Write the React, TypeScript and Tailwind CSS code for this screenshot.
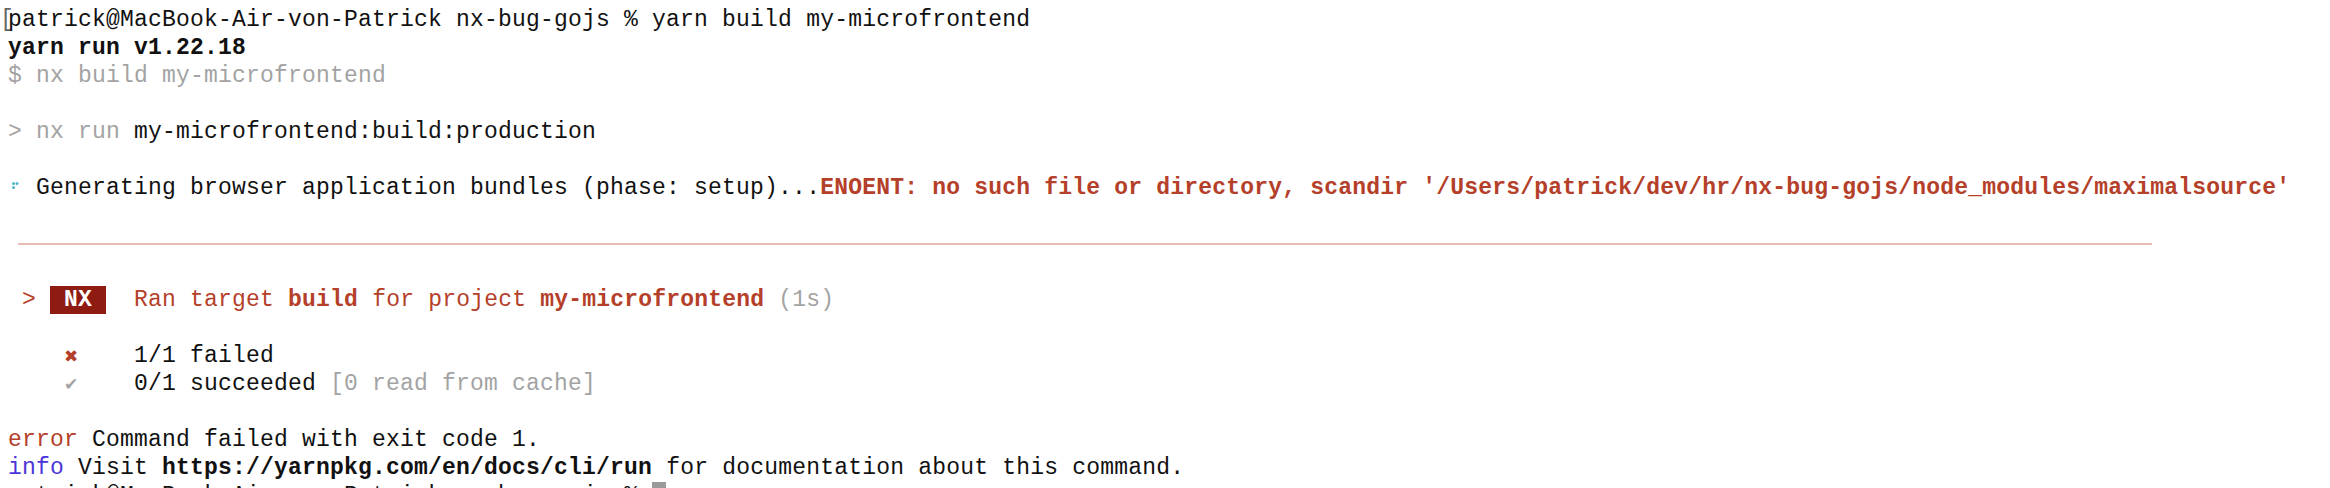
import React from "react";

const RED = "text-[#b5402a]";
const GRAY = "text-[#a3a3a3]";

function Line({ children }: { children?: React.ReactNode }) {
  return <div className="h-[28px] leading-[28px] whitespace-pre">{children ?? " "}</div>;
}

function Spinner() {
  return (
    <svg width="14" height="28" viewBox="0 0 14 28" className="inline-block align-top">
      <circle cx="5.5" cy="9.5" r="1.5" fill="#4eb6c9" />
      <circle cx="9" cy="9.5" r="1.5" fill="#4eb6c9" />
      <circle cx="5.5" cy="13.5" r="1.5" fill="#4eb6c9" />
    </svg>
  );
}

export default function App() {
  return (
    <div
      className="w-full h-[488px] overflow-hidden bg-white text-[#111] pt-[6px] pl-[8px] text-[23px] tracking-[0.2px]"
      style={{ fontFamily: '"Liberation Mono", "DejaVu Sans Mono", monospace' }}
    >
      <Line>
        <span className="inline-block w-[8px] -ml-[8px] text-[#666] font-light">[</span>
        patrick@MacBook-Air-von-Patrick nx-bug-gojs % yarn build my-microfrontend
      </Line>
      <Line>
        <span className="font-bold">yarn run v1.22.18</span>
      </Line>
      <Line>
        <span className={GRAY}>$ nx build my-microfrontend</span>
      </Line>
      <Line />
      <Line>
        <span className={GRAY}>&gt; nx run </span>my-microfrontend:build:production
      </Line>
      <Line />
      <Line>
        <Spinner />
        {" Generating browser application bundles (phase: setup)..."}
        <span className={`font-bold ${RED}`}>
          ENOENT: no such file or directory, scandir '/Users/patrick/dev/hr/nx-bug-gojs/node_modules/maximalsource'
        </span>
      </Line>
      <Line />
      <div className="h-[28px] flex items-center">
        <div className="ml-[10px] w-[2134px] h-[2px] bg-[#e6bcb4]" />
      </div>
      <Line />
      <Line>
        {" "}
        <span className={RED}>&gt;</span>
        {" "}
        <span className="inline-block h-[28px] bg-[#8e1c12] text-white font-bold">{" NX "}</span>
        {"  "}
        <span className={RED}>Ran target </span>
        <span className={`font-bold ${RED}`}>build</span>
        <span className={RED}> for project </span>
        <span className={`font-bold ${RED}`}>my-microfrontend</span>
        <span className={GRAY}> (1s)</span>
      </Line>
      <Line />
      <Line>
        {"    "}
        <span className="inline-block w-[14px] text-center text-[17px] text-[#b5402a]" style={{ fontFamily: '"DejaVu Sans", sans-serif' }}>✖</span>
        {"    1/1 failed"}
      </Line>
      <Line>
        {"    "}
        <span className="inline-block w-[14px] text-center text-[17px] text-[#a3a3a3]" style={{ fontFamily: '"DejaVu Sans", sans-serif' }}>✔</span>
        {"    0/1 succeeded "}
        <span className={GRAY}>[0 read from cache]</span>
      </Line>
      <Line />
      <Line>
        <span className={RED}>error</span> Command failed with exit code 1.
      </Line>
      <Line>
        <span className="text-[#4b35d8]">info</span> Visit{" "}
        <span className="font-bold">https://yarnpkg.com/en/docs/cli/run</span> for documentation about this command.
      </Line>
      <Line>
        {"patrick@MacBook-Air-von-Patrick nx-bug-gojs % "}
        <span className="inline-block w-[14px] h-[24px] align-top bg-[#9a9a9a]" />
      </Line>
    </div>
  );
}
